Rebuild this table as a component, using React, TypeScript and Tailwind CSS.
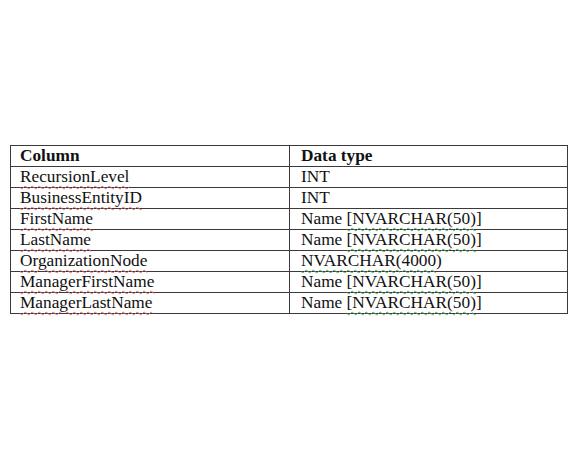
const rows: { name: string; type: string; prefix?: string; flagged: string; suffix?: string }[] = [
  { name: 'RecursionLevel', type: 'INT', flagged: '' },
  { name: 'BusinessEntityID', type: 'INT', flagged: '' },
  { name: 'FirstName', type: '', prefix: 'Name ', flagged: '[NVARCHAR(50)', suffix: ']' },
  { name: 'LastName', type: '', prefix: 'Name ', flagged: '[NVARCHAR(50)', suffix: ']' },
  { name: 'OrganizationNode', type: '', prefix: '', flagged: 'NVARCHAR(4000', suffix: ')' },
  { name: 'ManagerFirstName', type: '', prefix: 'Name ', flagged: '[NVARCHAR(50)', suffix: ']' },
  { name: 'ManagerLastName', type: '', prefix: 'Name ', flagged: '[NVARCHAR(50)', suffix: ']' },
];

export default function App() {
  return (
    <div className="w-[580px] h-[460px] bg-white pt-[145px] pl-[10px] font-['Liberation_Serif','Times_New_Roman',serif] text-[#111]">
      <table className="w-[558px] border-collapse text-[17.3px] leading-[20px]">
        <tbody>
          <tr className="h-[21px]">
            <th className="w-[279px] border border-[#3a3a3a] pl-[9px] text-left font-bold align-middle">Column</th>
            <th className="border border-[#3a3a3a] pl-[11px] text-left font-bold align-middle">Data type</th>
          </tr>
          {rows.map((r) => (
            <tr key={r.name} className="h-[21px]">
              <td className="border border-[#3a3a3a] pl-[9px] align-middle">
                <span className="underline decoration-wavy decoration-[#e07a7a] decoration-1 underline-offset-[3px]">{r.name}</span>
              </td>
              <td className="border border-[#3a3a3a] pl-[11px] align-middle">
                {r.type ? (
                  r.type
                ) : (
                  <>
                    {r.prefix}
                    <span className="underline decoration-wavy decoration-[#5fae6a] decoration-1 underline-offset-[3px]">{r.flagged}</span>
                    {r.suffix}
                  </>
                )}
              </td>
            </tr>
          ))}
        </tbody>
      </table>
    </div>
  );
}
